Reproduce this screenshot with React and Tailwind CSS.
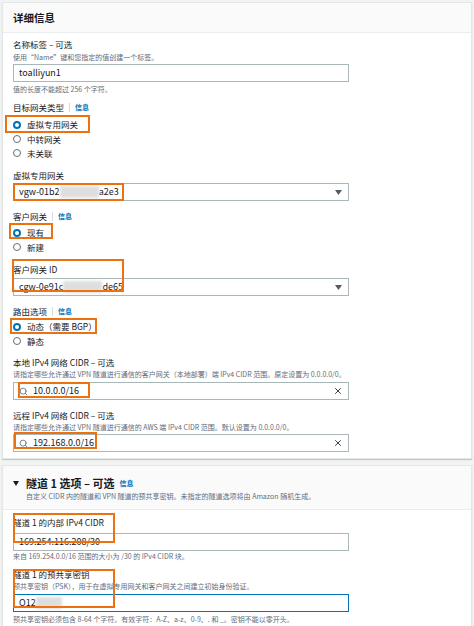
import { Search, X } from "lucide-react";

const Radio = ({ checked, label, h = "h-[14px]" }) => (
  <div className={`flex items-center gap-[6px] ${h}`}>
    <span
      className={
        checked
          ? "w-[8px] h-[8px] rounded-full border-[2.5px] border-[#0073bb] bg-white"
          : "w-[8px] h-[8px] rounded-full border border-[#687078] bg-white"
      }
    />
    <span className="text-[8.5px] leading-none text-[#16191f]">{label}</span>
  </div>
);

const Label = ({ children, info, className = "" }) => (
  <div className={`flex items-center h-[14px] text-[8.5px] leading-none text-[#16191f] ${className}`}>
    <span>{children}</span>
    {info && (
      <>
        <span className="mx-[5px] w-px h-[9px] bg-[#d5dbdb]" />
        <span className="text-[7px] font-bold text-[#0073bb]">信息</span>
      </>
    )}
  </div>
);

const Desc = ({ children, className = "" }) => (
  <div className={`flex items-center h-[10px] text-[7px] leading-none text-[#5f6b7a] whitespace-nowrap ${className}`}>
    {children}
  </div>
);

const Blur = ({ w }) => (
  <span className={`inline-block h-[12px] bg-[#dedede] blur-[1.5px] ${w}`} />
);

const Caret = () => (
  <svg width="7" height="5" viewBox="0 0 7 5" className="ml-auto">
    <path d="M0 0h7L3.5 5z" fill="#545b64" />
  </svg>
);

const boxes = [
  "left-[5px] top-[115px] w-[85px] h-[18px]",
  "left-[13px] top-[183px] w-[111px] h-[18px]",
  "left-[9px] top-[223px] w-[44px] h-[16px]",
  "left-[12px] top-[259px] w-[112px] h-[33px]",
  "left-[10px] top-[318px] w-[87px] h-[16px]",
  "left-[18px] top-[382px] w-[72px] h-[16px]",
  "left-[14px] top-[432px] w-[83px] h-[17px]",
  "left-[13px] top-[513px] w-[102px] h-[30px]",
  "left-[13px] top-[569px] w-[102px] h-[39px]",
];

export default function App() {
  return (
    <div className="relative w-[474px] h-[626px] overflow-hidden bg-[#f2f3f3] font-['Noto_Sans_CJK_SC',sans-serif]">
      {/* 详细信息 */}
      <div className="mx-[2px] mt-[2px] bg-white border border-[#e4e7e7] shadow-[0_1px_1px_rgba(0,0,0,0.18)]">
        <div className="h-[30px] bg-[#fafafa] border-b border-[#eaeded] px-[10px] flex items-center">
          <span className="text-[10.5px] font-bold text-[#16191f]">详细信息</span>
        </div>

        <div className="px-[10px] pt-[4px] pb-[6px]">
          <Label>名称标签 – 可选</Label>
          <Desc className="mt-[1px]">使用“Name”键和您指定的值创建一个标签。</Desc>
          <div className="mt-[2px] w-[336px] h-[18px] border border-[#aab7b8] flex items-center pl-[5px] text-[9px] text-[#16191f]">
            toalliyun1
          </div>
          <Desc className="mt-[2px]">值的长度不能超过 256 个字符。</Desc>

          <Label info className="mt-[6px]">目标网关类型</Label>
          <div className="mt-[3px]">
            <Radio checked label="虚拟专用网关" h="h-[15px]" />
            <Radio label="中转网关" />
            <Radio label="未关联" />
          </div>

          <Label className="mt-[8px]">虚拟专用网关</Label>
          <div className="mt-[1px] w-[336px] h-[18px] border border-[#aab7b8] flex items-center pl-[5px] pr-[6px] text-[9px] text-[#16191f]">
            <span>vgw-01b2</span>
            <Blur w="w-[39px]" />
            <span>a2e3</span>
            <Caret />
          </div>

          <Label info className="mt-[8px]">客户网关</Label>
          <div className="mt-[2px]">
            <Radio checked label="现有" h="h-[15px]" />
            <Radio label="新建" />
          </div>

          <Label className="mt-[8px]">客户网关 ID</Label>
          <div className="mt-[2px] w-[336px] h-[18px] border border-[#aab7b8] flex items-center pl-[5px] pr-[6px] text-[9px] text-[#16191f]">
            <span>cgw-0e91c</span>
            <Blur w="w-[39px]" />
            <span>de65</span>
            <Caret />
          </div>

          <Label info className="mt-[8px]">路由选项</Label>
          <div className="mt-[1px]">
            <Radio checked label="动态（需要 BGP）" h="h-[15px]" />
            <Radio label="静态" />
          </div>

          <Label className="mt-[7px]">本地 IPv4 网络 CIDR – 可选</Label>
          <Desc className="h-[9px]">
            请指定哪些允许通过 VPN 隧道进行通信的客户网关（本地部署）端 IPv4 CIDR 范围。原定设置为 0.0.0.0/0。
          </Desc>
          <div className="mt-[3px] w-[336px] h-[18px] border border-[#aab7b8] flex items-center pl-[5px] pr-[5px] text-[9px] text-[#16191f]">
            <Search size={9} strokeWidth={2} color="#545b64" />
            <span className="ml-[5px]">10.0.0.0/16</span>
            <X size={10} strokeWidth={2} color="#16191f" className="ml-auto" />
          </div>

          <Label className="mt-[8px]">远程 IPv4 网络 CIDR – 可选</Label>
          <Desc className="h-[9px]">
            请指定哪些允许通过 VPN 隧道进行通信的 AWS 端 IPv4 CIDR 范围。默认设置为 0.0.0.0/0。
          </Desc>
          <div className="mt-[2px] w-[336px] h-[18px] border border-[#aab7b8] flex items-center pl-[5px] pr-[5px] text-[9px] text-[#16191f]">
            <Search size={9} strokeWidth={2} color="#545b64" />
            <span className="ml-[5px]">192.168.0.0/16</span>
            <X size={10} strokeWidth={2} color="#16191f" className="ml-auto" />
          </div>
        </div>
      </div>

      {/* 隧道 1 选项 */}
      <div className="mx-[2px] mt-[6px] bg-white border border-[#e4e7e7] shadow-[0_1px_1px_rgba(0,0,0,0.18)]">
        <div className="bg-[#fafafa] border-b border-[#eaeded] px-[10px] pt-[9px] pb-[8px]">
          <div className="flex items-center h-[16px]">
            <svg width="6" height="5" viewBox="0 0 6 5" className="mr-[7px]">
              <path d="M0 0h6L3 5z" fill="#16191f" />
            </svg>
            <span className="text-[11px] font-bold text-[#16191f]">隧道 1 选项 – 可选</span>
            <span className="ml-[5px] text-[7px] font-bold text-[#0073bb]">信息</span>
          </div>
          <Desc className="h-[9px] pl-[13px]">
            自定义 CIDR 内的隧道和 VPN 隧道的预共享密钥。未指定的隧道选项将由 Amazon 随机生成。
          </Desc>
        </div>

        <div className="px-[10px] pt-[5px] pb-[10px]">
          <Label>隧道 1 的内部 IPv4 CIDR</Label>
          <div className="mt-[4px] w-[336px] h-[18px] border border-[#aab7b8] flex items-center pl-[5px] text-[9px] text-[#16191f]">
            169.254.116.208/30
          </div>
          <Desc>来自 169.254.0.0/16 范围的大小为 /30 的 IPv4 CIDR 块。</Desc>

          <Label className="mt-[6px] h-[10px]">隧道 1 的预共享密钥</Label>
          <Desc className="h-[7px]">
            预共享密钥（PSK），用于在虚拟专用网关和客户网关之间建立初始身份验证。
          </Desc>
          <div className="mt-[3px] w-[336px] h-[18px] border-[1.5px] border-[#0073bb] flex items-center pl-[5px] text-[9px] text-[#16191f]">
            <span>Q12</span>
            <Blur w="w-[26px]" />
          </div>
          <Desc className="mt-[2px]">
            预共享密钥必须包含 8-64 个字符。有效字符：A-Z、a-z、0-9、. 和 _。密钥不能以零开头。
          </Desc>
        </div>
      </div>

      {boxes.map((b) => (
        <div key={b} className={`absolute border-2 border-[#ec7211] ${b}`} />
      ))}
    </div>
  );
}
